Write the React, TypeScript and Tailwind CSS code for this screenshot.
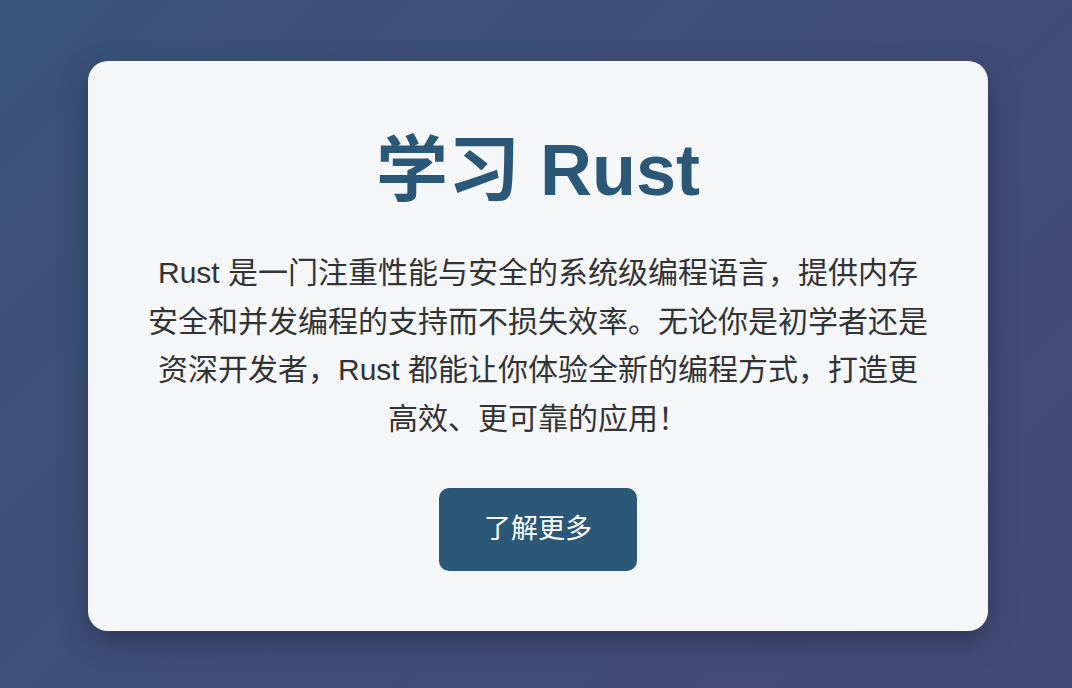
export default function App() {
  return (
    <main className="flex min-h-screen items-center justify-center bg-linear-135 from-[#39537a] to-[#464a78] pt-[4px] pl-[4px] font-['Liberation_Sans','Noto_Sans_CJK_SC',sans-serif]">
      <section className="w-[900px] rounded-[20px] bg-[#f4f6f8] px-14 pt-14 pb-[60px] text-center shadow-[0_10px_30px_rgba(0,0,0,0.3)]">
        <h1 className="text-[72px] leading-[106px] font-bold text-[#2b5876]">学习 Rust</h1>
        <p className="mt-[26px] text-[30px] leading-[48.5px] text-[#333]">
          Rust 是一门注重性能与安全的系统级编程语言，提供内存安全和并发编程的支持而不损失效率。无论你是初学者还是资深开发者，Rust
          都能让你体验全新的编程方式，打造更高效、更可靠的应用！
        </p>
        <div className="mt-[45px] flex justify-center">
          <button className="flex h-[83px] w-[198px] items-center justify-center rounded-[10px] bg-[#2b5876] text-[27px] text-white">
            了解更多
          </button>
        </div>
      </section>
    </main>
  );
}
